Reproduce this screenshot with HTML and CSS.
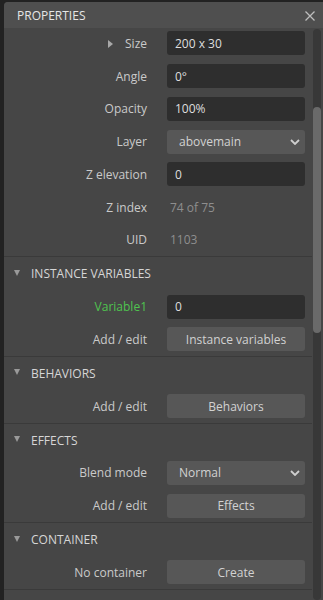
FILE: index.html
```html
<!DOCTYPE html>
<html>
<head>
<meta charset="utf-8">
<link rel="stylesheet" href="styles.css">
</head>
<body>
<div class="panel">
  <div class="titlebar">
    <span class="title">PROPERTIES</span>
    <svg class="close" width="10" height="10" viewBox="0 0 10 10"><path d="M0.5 0.5 L9.5 9.5 M9.5 0.5 L0.5 9.5" stroke="#bdbdbd" stroke-width="1.3" fill="none"/></svg>
  </div>
  <div class="body">
    <div class="scroll">
      <div class="content">
        <div class="section first">
          <div class="row"><div class="label"><span class="tri-right"></span>Size</div><div class="input">200 x 30</div></div>
          <div class="row"><div class="label">Angle</div><div class="input">0°</div></div>
          <div class="row"><div class="label">Opacity</div><div class="input">100%</div></div>
          <div class="row"><div class="label">Layer</div><div class="select">abovemain<svg class="chev" width="10" height="6" viewBox="0 0 10 6"><path d="M1 1 L5 5 L9 1" stroke="#cfcfcf" stroke-width="1.8" fill="none"/></svg></div></div>
          <div class="row"><div class="label">Z elevation</div><div class="input">0</div></div>
          <div class="row"><div class="label">Z index</div><div class="static">74 of 75</div></div>
          <div class="row"><div class="label">UID</div><div class="static">1103</div></div>
        </div>
        <div class="section">
          <div class="header"><span class="tri-down"></span>INSTANCE VARIABLES</div>
          <div class="row"><div class="label green">Variable1</div><div class="input">0</div></div>
          <div class="row"><div class="label">Add / edit</div><div class="button">Instance variables</div></div>
        </div>
        <div class="section">
          <div class="header"><span class="tri-down"></span>BEHAVIORS</div>
          <div class="row"><div class="label">Add / edit</div><div class="button">Behaviors</div></div>
        </div>
        <div class="section">
          <div class="header"><span class="tri-down"></span>EFFECTS</div>
          <div class="row"><div class="label">Blend mode</div><div class="select">Normal<svg class="chev" width="10" height="6" viewBox="0 0 10 6"><path d="M1 1 L5 5 L9 1" stroke="#cfcfcf" stroke-width="1.8" fill="none"/></svg></div></div>
          <div class="row"><div class="label">Add / edit</div><div class="button">Effects</div></div>
        </div>
        <div class="section">
          <div class="header"><span class="tri-down"></span>CONTAINER</div>
          <div class="row"><div class="label">No container</div><div class="button">Create</div></div>
        </div>
        <div class="section last"></div>
      </div>
    </div>
    <div class="scrollbar"><div class="track"><div class="thumb"></div></div></div>
  </div>
</div>
</body>
</html>
```
FILE: styles.css
```css
html, body {
  margin: 0;
  padding: 0;
  background: #222222;
  width: 323px;
  height: 600px;
  overflow: hidden;
}
body {
  font-family: "Open Sans", "Noto Sans", sans-serif;
  font-size: 12px;
  color: #cfcfcf;
}
.panel {
  margin: 2px 0 0 4px;
  height: 598px;
  background: #464646;
  border-top-left-radius: 4px;
  display: flex;
  flex-direction: column;
  overflow: hidden;
}
.titlebar {
  height: 26px;
  flex: none;
  background: #4f4f4f;
  display: flex;
  align-items: center;
  justify-content: space-between;
  padding: 0 8px 0 13px;
}
.title {
  color: #e6e6e6;
  font-size: 12px;
}
.close {
  display: block;
  margin-top: 1px;
}
.body {
  flex: 1;
  display: flex;
  min-height: 0;
}
.scroll {
  flex: 1;
  overflow: hidden;
}
.content {
  margin-top: -1px;
}
.section {
  border-top: 1px solid #3a3a3a;
}
.section.first {
  border-top: none;
}
.section.last {
  height: 20px;
}
.row {
  height: 32.75px;
  display: grid;
  grid-template-columns: 143px 138px;
  column-gap: 20px;
  align-items: center;
}
.label {
  text-align: right;
  color: #cacaca;
  white-space: nowrap;
}
.label.green {
  color: #4fc44f;
}
.tri-right {
  display: inline-block;
  width: 0;
  height: 0;
  border-top: 4px solid transparent;
  border-bottom: 4px solid transparent;
  border-left: 5px solid #a8a8a8;
  margin-right: 12px;
  vertical-align: 0px;
}
.input, .select, .button {
  height: 24px;
  border-radius: 3px;
  box-sizing: border-box;
  display: flex;
  align-items: center;
  white-space: nowrap;
}
.input {
  background: #2e2e2e;
  color: #dedede;
  padding-left: 8px;
}
.select {
  background: #575757;
  color: #d2d2d2;
  padding-left: 12px;
  justify-content: space-between;
  padding-right: 5px;
}
.chev {
  display: block;
}
.button {
  background: #575757;
  color: #d2d2d2;
  justify-content: center;
}
.static {
  color: #8e8e8e;
  padding-left: 3px;
}
.header {
  height: 33px;
  display: flex;
  align-items: center;
  padding-left: 10px;
  color: #d6d6d6;
}
.tri-down {
  display: inline-block;
  width: 0;
  height: 0;
  border-left: 3.5px solid transparent;
  border-right: 3.5px solid transparent;
  border-top: 6px solid #9a9a9a;
  margin-right: 11px;
  margin-top: -2px;
}
.scrollbar {
  width: 11px;
  flex: none;
  padding: 1px 2px 0 1px;
  box-sizing: border-box;
  background: #464646;
}
.track {
  height: 100%;
  background: #383838;
  border-radius: 4px;
  padding-top: 78px;
  box-sizing: border-box;
}
.thumb {
  height: 226px;
  background: #6a6a6a;
  border-radius: 4px;
}
```
